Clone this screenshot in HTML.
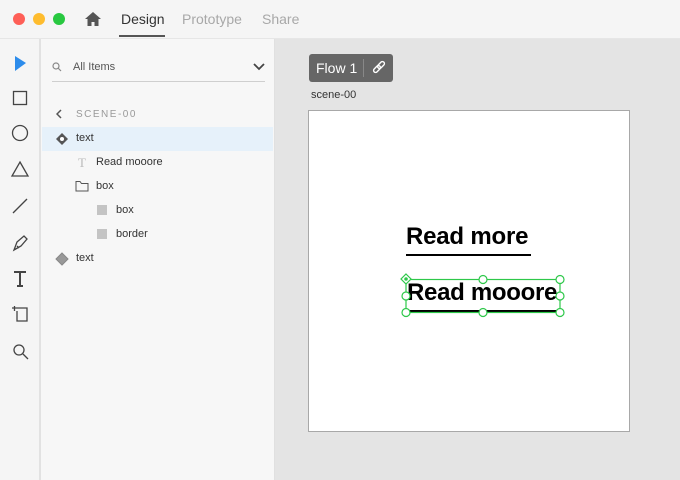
<!DOCTYPE html>
<html><head><style>
*{margin:0;padding:0;box-sizing:border-box}
body{width:680px;height:480px;overflow:hidden;background:#e4e4e4;font-family:"Liberation Sans",Arial,sans-serif;position:relative}
.a{position:absolute}
.top{left:0;top:0;width:680px;height:39px;background:#f5f5f5;border-bottom:1px solid #e6e6e6}
.dot{width:12px;height:12px;border-radius:50%;top:13px}
.tab{top:11px;font-size:14px;color:#a8a8a8}
.tools{left:0;top:39px;width:41px;height:441px;background:#f5f5f5;border-right:2px solid #e2e2e2}
.panel{left:41px;top:39px;width:234px;height:441px;background:#f7f7f7;border-right:1px solid #e0e0e0}
.row{font-size:11px;color:#333}
</style></head><body>
<div class="a top"></div>
<div class="a dot" style="left:13px;background:#fe5f57"></div>
<div class="a dot" style="left:33px;background:#febc2e"></div>
<div class="a dot" style="left:53px;background:#28c840"></div>
<svg class="a" style="left:84px;top:11px" width="18" height="16" viewBox="0 0 18 16"><path d="M9 1L1 8h2.5v7h4v-4h3v4h4V8H17z" fill="#555"/></svg>
<div class="a tab" style="left:121px;color:#333">Design</div>
<div class="a" style="left:119px;top:35px;width:46px;height:2px;background:#555"></div>
<div class="a tab" style="left:182px">Prototype</div>
<div class="a tab" style="left:262px">Share</div>
<div class="a tools"></div>
<svg class="a" style="left:0;top:40px" width="40" height="330" viewBox="0 40 40 330" fill="none" stroke="#444" stroke-width="1.3">
<path d="M15 56L26 63L15 71Z" fill="#2d8ceb" stroke="none"/>
<rect x="13.5" y="91.5" width="13" height="13"/>
<circle cx="20" cy="133" r="7.5"/>
<path d="M20 162L28 176H12Z"/>
<path d="M13 213L27 199"/>
<path d="M14 250l3-8 7-6 3 3-6 7z M17 246l2 2"/>
<path d="M14 272h12M20 272v14M17 286h6" stroke-width="2"/>
<path d="M17 308h10v13H17v-10M12 308h5M14.5 306v5" />
<circle cx="19" cy="350" r="5"/><path d="M23 354l5 5"/>
</svg>
<div class="a panel"></div>
<svg class="a" style="left:52px;top:62px" width="10" height="10"><circle cx="4" cy="4" r="3" fill="none" stroke="#888" stroke-width="1.2"/><path d="M6 6l3 3" stroke="#888" stroke-width="1.2"/></svg>
<div class="a row" style="left:73px;top:61px;color:#555">All Items</div>
<svg class="a" style="left:253px;top:63px" width="12" height="8"><path d="M1 1l5 5 5-5" fill="none" stroke="#444" stroke-width="1.8"/></svg>
<div class="a" style="left:52px;top:81px;width:213px;height:1px;background:#cfcfcf"></div>
<svg class="a" style="left:56px;top:109px" width="6" height="10"><path d="M5 1L1 5l4 4" fill="none" stroke="#555" stroke-width="1.5"/></svg>
<div class="a row" style="left:76px;top:109px;color:#999;letter-spacing:1.5px;font-size:10px">SCENE-00</div>
<div class="a" style="left:42px;top:127px;width:231px;height:24px;background:#e6f1fa"></div>
<svg class="a" style="left:55px;top:132px" width="14" height="14"><path d="M7 1l6 6-6 6-6-6z" fill="#555"/><circle cx="7" cy="7" r="2" fill="#fff"/></svg>
<div class="a row" style="left:76px;top:132px">text</div>
<div class="a" style="left:78px;top:155px;font-family:'Liberation Serif',serif;font-size:13px;color:#bbb">T</div>
<div class="a row" style="left:96px;top:156px">Read mooore</div>
<svg class="a" style="left:75px;top:180px" width="14" height="12"><path d="M1 1.5h4l1.5 2H13v7.5H1z" fill="none" stroke="#555"/></svg>
<div class="a row" style="left:96px;top:180px">box</div>
<div class="a" style="left:97px;top:205px;width:10px;height:10px;background:#c4c4c4"></div>
<div class="a row" style="left:116px;top:204px">box</div>
<div class="a" style="left:97px;top:229px;width:10px;height:10px;background:#c4c4c4"></div>
<div class="a row" style="left:116px;top:228px">border</div>
<svg class="a" style="left:55px;top:252px" width="14" height="14"><path d="M7 1l6 6-6 6-6-6z" fill="#999" stroke="#888"/></svg>
<div class="a row" style="left:76px;top:252px">text</div>
<div class="a" style="left:309px;top:54px;width:84px;height:28px;background:#666;border-radius:3px"></div>
<div class="a" style="left:316px;top:60px;color:#fff;font-size:14px">Flow 1</div>
<div class="a" style="left:363px;top:59px;width:1px;height:18px;background:#888"></div>
<svg class="a" style="left:371px;top:60px" width="16" height="16"><g fill="none" stroke="#fff" stroke-width="1.4"><rect x="2" y="7" width="8" height="4" rx="2" transform="rotate(-45 6 9)"/><rect x="6" y="3" width="8" height="4" rx="2" transform="rotate(-45 10 5)"/></g></svg>
<div class="a" style="left:311px;top:89px;font-size:11px;color:#333">scene-00</div>
<div class="a" style="left:308px;top:110px;width:322px;height:322px;background:#fff;border:1px solid #a8a8a8"></div>
<div class="a" style="left:406px;top:223px;font-size:24px;font-weight:bold;color:#000;letter-spacing:-0.2px">Read more</div>
<div class="a" style="left:406px;top:254px;width:125px;height:2px;background:#000"></div>
<div class="a" style="left:407px;top:279px;font-size:24px;font-weight:bold;color:#000;letter-spacing:-0.3px">Read mooore</div>
<div class="a" style="left:406px;top:310px;width:154px;height:2px;background:#000"></div>
<svg class="a" style="left:398px;top:271px" width="172" height="50"><g fill="#fff" stroke="#2ec84a" stroke-width="1.2">
<rect x="8" y="8.5" width="154" height="33" fill="none"/>
<circle cx="85" cy="8.5" r="4"/><circle cx="162" cy="8.5" r="4"/>
<circle cx="8" cy="25" r="4"/><circle cx="162" cy="25" r="4"/>
<circle cx="8" cy="41.5" r="4"/><circle cx="85" cy="41.5" r="4"/><circle cx="162" cy="41.5" r="4"/>
<path d="M8 3l5 5-5 5-5-5z"/><circle cx="8" cy="8" r="1.2" fill="#2ec84a"/></g></svg>
</body></html>
